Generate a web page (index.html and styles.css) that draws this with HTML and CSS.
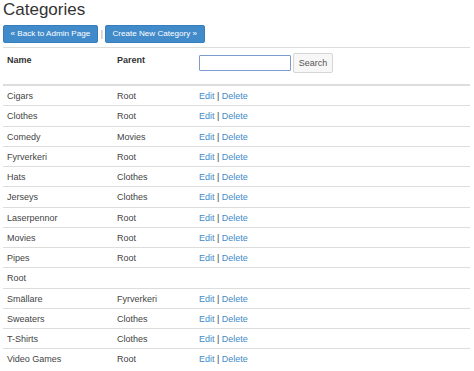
FILE: index.html
```html
<!DOCTYPE html>
<html>
<head>
<meta charset="utf-8">
<link rel="stylesheet" href="styles.css">
</head>
<body>
<div class="page">
  <h1 class="title">Categories</h1>
  <div class="actions">
    <a class="btn btn-primary" href="#">« Back to Admin Page</a>
    <span class="sep">|</span>
    <a class="btn btn-primary" href="#">Create New Category »</a>
  </div>
  <table class="cat-table">
    <colgroup>
      <col class="c-name">
      <col class="c-parent">
      <col class="c-act">
    </colgroup>
    <thead>
      <tr>
        <th>Name</th>
        <th>Parent</th>
        <th class="search-cell">
          <div class="search">
            <input class="search-input" type="text">
            <button class="btn-default" type="button">Search</button>
          </div>
        </th>
      </tr>
    </thead>
    <tbody>
      <tr><td>Cigars</td><td>Root</td><td><a href="#">Edit</a> | <a href="#">Delete</a></td></tr>
      <tr><td>Clothes</td><td>Root</td><td><a href="#">Edit</a> | <a href="#">Delete</a></td></tr>
      <tr><td>Comedy</td><td>Movies</td><td><a href="#">Edit</a> | <a href="#">Delete</a></td></tr>
      <tr><td>Fyrverkeri</td><td>Root</td><td><a href="#">Edit</a> | <a href="#">Delete</a></td></tr>
      <tr><td>Hats</td><td>Clothes</td><td><a href="#">Edit</a> | <a href="#">Delete</a></td></tr>
      <tr><td>Jerseys</td><td>Clothes</td><td><a href="#">Edit</a> | <a href="#">Delete</a></td></tr>
      <tr><td>Laserpennor</td><td>Root</td><td><a href="#">Edit</a> | <a href="#">Delete</a></td></tr>
      <tr><td>Movies</td><td>Root</td><td><a href="#">Edit</a> | <a href="#">Delete</a></td></tr>
      <tr><td>Pipes</td><td>Root</td><td><a href="#">Edit</a> | <a href="#">Delete</a></td></tr>
      <tr><td>Root</td><td></td><td></td></tr>
      <tr><td>Smällare</td><td>Fyrverkeri</td><td><a href="#">Edit</a> | <a href="#">Delete</a></td></tr>
      <tr><td>Sweaters</td><td>Clothes</td><td><a href="#">Edit</a> | <a href="#">Delete</a></td></tr>
      <tr><td>T-Shirts</td><td>Clothes</td><td><a href="#">Edit</a> | <a href="#">Delete</a></td></tr>
      <tr><td>Video Games</td><td>Root</td><td><a href="#">Edit</a> | <a href="#">Delete</a></td></tr>
    </tbody>
  </table>
</div>
</body>
</html>
```

FILE: styles.css
```css
html, body {
  margin: 0;
  padding: 0;
  background: #fff;
}
body {
  font-family: "Liberation Sans", Arial, sans-serif;
  font-size: 9px;
  color: #333;
}
.page {
  padding: 0 4px 0 3px;
}
.title {
  margin: 0;
  font-size: 17px;
  line-height: 20px;
  font-weight: normal;
  color: #333;
}
.actions {
  display: flex;
  align-items: center;
  margin-top: 5px;
  height: 18px;
}
.btn {
  display: inline-block;
  text-decoration: none;
  font-size: 8.1px;
  line-height: 16px;
  height: 16px;
  padding: 0 6.5px;
  border-radius: 2px;
}
.btn-primary {
  background: #428bca;
  border: 1px solid #357ebd;
  color: #fff;
}
.sep {
  color: #c98a8a;
  margin: 0 2px 0 3px;
  font-size: 9px;
}
.cat-table {
  width: 467px;
  border-collapse: collapse;
  margin-top: 4px;
}
.c-name { width: 110px; }
.c-parent { width: 82px; }
.cat-table th {
  text-align: left;
  font-weight: bold;
  vertical-align: top;
  border-top: 1px solid #ddd;
  border-bottom: 2px solid #ddd;
  padding: 6px 4px 0 4px;
  height: 30px;
  line-height: 12px;
}
.cat-table th.search-cell {
  padding-top: 5px;
}
.search {
  display: flex;
  align-items: center;
  gap: 2px;
}
.search-input {
  width: 88px;
  height: 14px;
  padding: 0 1px;
  border: 1px solid #7b9bd1;
  border-radius: 1px;
  margin: 0;
}
.btn-default {
  font-family: "Liberation Sans", Arial, sans-serif;
  font-size: 9px;
  color: #555;
  background: #f7f7f7;
  border: 1px solid #d6d6d6;
  border-radius: 2px;
  height: 20px;
  width: 40px;
  padding: 0;
  margin: 0;
}
.cat-table td {
  border-top: 1px solid #ddd;
  padding: 1px 4px 0 4px;
  height: 18.25px;
  line-height: 18.25px;
  vertical-align: middle;
  color: #444;
}
.cat-table td a {
  color: #428bca;
  text-decoration: none;
}
```
